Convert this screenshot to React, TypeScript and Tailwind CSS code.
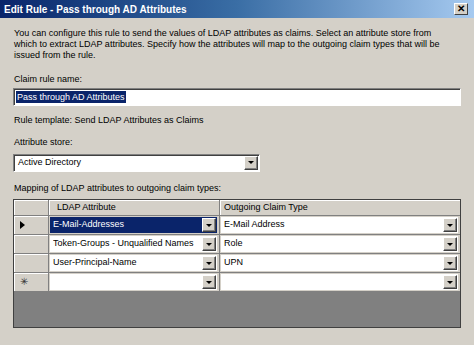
import React from 'react'

const font = "font-['Liberation_Sans',Arial,sans-serif]"

function DropButton() {
  return (
    <div className="w-[14px] h-[14px] shrink-0 bg-[#d4d0c8] border border-t-white border-l-white border-b-[#404040] border-r-[#404040] shadow-[inset_-1px_-1px_0_#808080] flex items-center justify-center">
      <div className="w-0 h-0 border-l-[3px] border-r-[3px] border-t-[3px] border-l-transparent border-r-transparent border-t-black" />
    </div>
  )
}

function Cell({ text, width, selected }: { text: string; width: string; selected?: boolean }) {
  return (
    <div className={`${width} h-full shrink-0 border-r border-[#808080] pl-[1px] py-[1px] pr-[2px]`}>
      <div className={`h-full flex items-center pl-[3px] pr-[1px] ${selected ? 'bg-[#0a246a] text-white' : 'bg-white text-black'}`}>
        <span className="flex-1 truncate">{text}</span>
        <DropButton />
      </div>
    </div>
  )
}

function RowHeader({ marker }: { marker?: 'arrow' | 'star' }) {
  return (
    <div className="w-[35px] h-full shrink-0 bg-[#d4d0c8] border-r border-[#808080] shadow-[inset_1px_1px_0_white] flex items-center pl-[6px]">
      {marker === 'arrow' && (
        <div className="w-0 h-0 border-t-[4px] border-b-[4px] border-l-[5px] border-t-transparent border-b-transparent border-l-black" />
      )}
      {marker === 'star' && <span className="text-[10px] leading-none text-[#333]">✳</span>}
    </div>
  )
}

const rows = [
  { a: 'E-Mail-Addresses', b: 'E-Mail Address', marker: 'arrow' as const, selected: true },
  { a: 'Token-Groups - Unqualified Names', b: 'Role' },
  { a: 'User-Principal-Name', b: 'UPN' },
  { a: '', b: '', marker: 'star' as const },
]

export default function App() {
  return (
    <div className={`w-[474px] h-[345px] bg-[#d4d0c8] overflow-hidden text-[9px] text-black ${font}`}>
      {/* title bar */}
      <div className="h-[18px] bg-gradient-to-r from-[#0a246a] via-[#3a6ea5] to-[#a6caf0] flex items-center justify-between pl-[4px] pr-[6px]">
        <span className="text-white font-bold text-[10px]">Edit Rule - Pass through AD Attributes</span>
        <div className="w-[14px] h-[12px] bg-[#d4d0c8] border border-t-white border-l-white border-b-[#404040] border-r-[#404040] flex items-center justify-center text-[10px] font-bold leading-none">
          ✕
        </div>
      </div>

      <div className="pl-[13px] pr-[13px] pt-[10px]">
        <p className="leading-[11px] pl-[1px] pr-[20px]">
          You can configure this rule to send the values of LDAP attributes as claims. Select an attribute store from
          which to extract LDAP attributes. Specify how the attributes will map to the outgoing claim types that will be
          issued from the rule.
        </p>

        <div className="mt-[12px] pl-[1px]">Claim rule name:</div>
        <div className="mt-[1px] h-[18px] bg-white border border-t-[#808080] border-l-[#808080] border-b-white border-r-white shadow-[inset_1px_1px_0_#404040] flex items-center pl-[2px]">
          <span className="bg-[#0a246a] text-white px-[1px] leading-[12px]">Pass through AD Attributes</span>
        </div>

        <div className="mt-[8px] pl-[1px]">Rule template: Send LDAP Attributes as Claims</div>

        <div className="mt-[9px] pl-[1px]">Attribute store:</div>
        <div className="mt-[4px] w-[247px] h-[18px] bg-white border border-t-[#808080] border-l-[#808080] border-b-white border-r-white shadow-[inset_1px_1px_0_#404040] flex items-center pl-[4px] pr-[1px]">
          <span className="flex-1">Active Directory</span>
          <DropButton />
        </div>

        <div className="mt-[10px] pl-[1px]">Mapping of LDAP attributes to outgoing claim types:</div>

        <div className="mt-[4px] w-[448px] h-[129px] border border-[#404040] bg-[#808080] flex flex-col">
          <div className="h-[16px] flex shrink-0 bg-[#d4d0c8] border-b border-[#808080]">
            <div className="w-[35px] h-full border-r border-[#808080] shadow-[inset_1px_1px_0_white]" />
            <div className="w-[171px] h-full border-r border-[#808080] shadow-[inset_1px_1px_0_white] flex items-center pl-[8px]">
              LDAP Attribute
            </div>
            <div className="flex-1 h-full shadow-[inset_1px_1px_0_white] flex items-center pl-[4px]">Outgoing Claim Type</div>
          </div>
          {rows.map((r, i) => (
            <div key={i} className="h-[19px] flex shrink-0 bg-[#d4d0c8] border-b border-[#808080]">
              <RowHeader marker={r.marker} />
              <Cell text={r.a} width="w-[171px]" selected={r.selected} />
              <Cell text={r.b} width="flex-1 border-r-0" />
            </div>
          ))}
        </div>
      </div>
    </div>
  )
}
